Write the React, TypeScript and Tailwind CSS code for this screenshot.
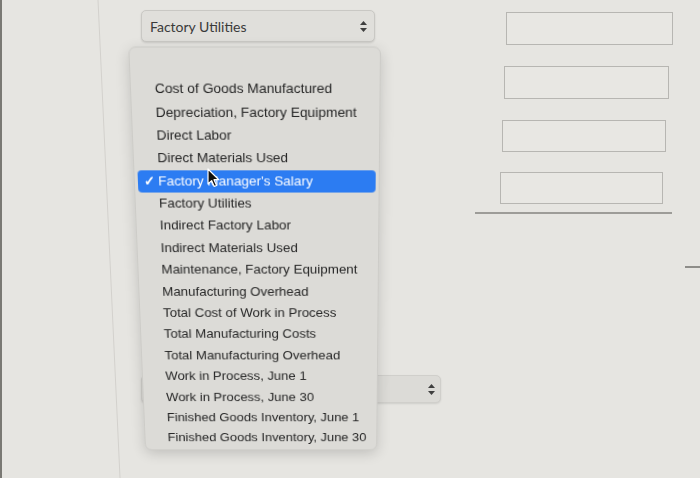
import React from "react";

const items = [
  "Cost of Goods Manufactured",
  "Depreciation, Factory Equipment",
  "Direct Labor",
  "Direct Materials Used",
  "Factory Manager's Salary",
  "Factory Utilities",
  "Indirect Factory Labor",
  "Indirect Materials Used",
  "Maintenance, Factory Equipment",
  "Manufacturing Overhead",
  "Total Cost of Work in Process",
  "Total Manufacturing Costs",
  "Total Manufacturing Overhead",
  "Work in Process, June 1",
  "Work in Process, June 30",
  "Finished Goods Inventory, June 1",
  "Finished Goods Inventory, June 30",
];

function UpDown({ className }: { className?: string }) {
  return (
    <svg width="7" height="11" viewBox="0 0 7 11" className={className}>
      <path d="M3.5 0 L7 4 L0 4 Z" fill="#3f3f3f" />
      <path d="M3.5 11 L7 7 L0 7 Z" fill="#3f3f3f" />
    </svg>
  );
}

export default function App() {
  return (
    <div
      className="relative w-[700px] h-[478px] overflow-hidden bg-[#e6e5e1] border-l-2 border-[#7a7974]"
      style={{ fontFamily: '"Liberation Sans", Arial, sans-serif' }}
    >
      <svg className="absolute inset-0 pointer-events-none" width="700" height="478">
        <line x1="96" y1="0" x2="118" y2="478" stroke="#d3d1cd" strokeWidth="1" />
      </svg>

      <div className="flex pt-[10px] pl-[139px]">
        {/* middle column */}
        <div className="flex flex-col w-[300px]">
          <div className="w-[234px] h-[32px] flex items-center justify-between pl-[8px] pr-[7px] rounded-[5px] border border-[#c9c8c4] bg-[#e0dfdb] shadow-[0_1px_2px_rgba(0,0,0,0.12)]">
            <span
              className="text-[14px] text-[#3a3a3a]"
              style={{ fontFamily: 'Lato, "Liberation Sans", sans-serif' }}
            >
              Factory Utilities
            </span>
            <UpDown />
          </div>
          <div className="mt-[333px] w-[300px] h-[28px] flex items-center justify-end pr-[5px] rounded-[5px] border border-[#d0cfcb] bg-[#dcdbd7] shadow-[0_1px_2px_rgba(0,0,0,0.1)]">
            <UpDown />
          </div>
        </div>

        {/* right column */}
        <div className="ml-[34px] w-[197px] flex flex-col">
          <div className="mt-[2px] ml-[31px] w-[167px] h-[33px] border border-[#b7b6b2] bg-[#e8e7e3]" />
          <div className="mt-[21px] ml-[29px] w-[165px] h-[33px] border border-[#b7b6b2] bg-[#e8e7e3]" />
          <div className="mt-[21px] ml-[27px] w-[164px] h-[32px] border border-[#b7b6b2] bg-[#e8e7e3]" />
          <div className="mt-[20px] ml-[25px] w-[163px] h-[32px] border border-[#b7b6b2] bg-[#e8e7e3]" />
          <div className="mt-[8px] w-[197px] h-[2px] bg-[#9d9c98]" />
        </div>

        <div className="ml-[13px] w-[15px] mt-[256px] h-[2px] bg-[#8e8d89]" />
      </div>

      {/* dropdown menu (photographed at a slight angle) */}
      <div className="absolute left-[135px] top-[51px] w-[242px] h-[412px] [transform:perspective(1000px)_rotateX(-12deg)_skewX(0.9deg)] rounded-[7px] border border-[#cdccc8] bg-[#dcdbd7] shadow-[0_4px_14px_rgba(0,0,0,0.16)] pt-[28px]">
        {items.map((label, i) => {
          const selected = i === 4;
          return (
            <div
              key={label}
              className={
                (selected
                  ? "rounded-[4px] bg-[#2c7cf2] text-white "
                  : "text-[#262626] ") +
                "mx-[3px] h-[22.4px] flex items-center text-[13.4px] whitespace-nowrap"
              }
            >
              <span className="w-[20px] pl-[6px] leading-none font-bold">
                {selected ? "✓" : ""}
              </span>
              <span>{label}</span>
            </div>
          );
        })}
      </div>

      {/* mouse cursor */}
      <svg
        className="absolute left-[205px] top-[168px] pointer-events-none"
        width="13"
        height="20"
        viewBox="0 0 13 20"
      >
        <path
          d="M1 1 L1 16 L4.6 12.6 L7.2 18.5 L9.6 17.5 L7 11.7 L11.8 11.7 Z"
          fill="#111"
          stroke="#fff"
          strokeWidth="1.2"
          strokeLinejoin="round"
        />
      </svg>
    </div>
  );
}
